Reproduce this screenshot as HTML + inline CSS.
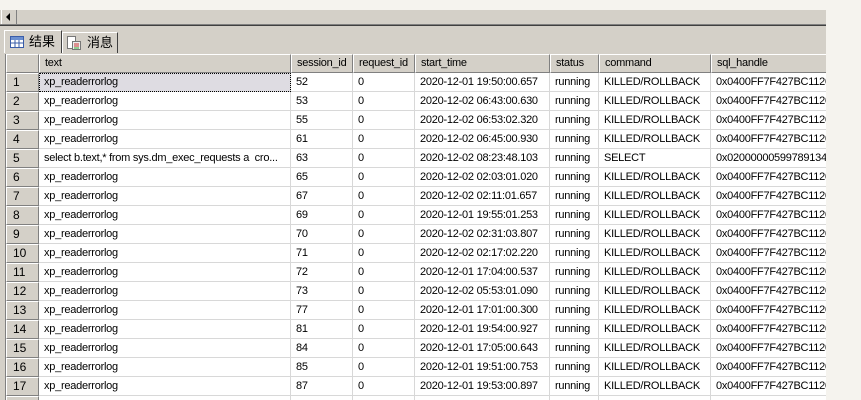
<!DOCTYPE html>
<html><head><meta charset="utf-8"><style>
*{box-sizing:border-box;margin:0;padding:0}
body{width:861px;height:400px;overflow:hidden;background:#f5f3ee;position:relative;font-family:"Liberation Sans","Noto Sans CJK SC",sans-serif;font-size:11px;color:#000}
#pane{position:absolute;left:0;top:10px;width:826px;height:390px;background:#d4d0c8}
#sb{position:absolute;left:0;top:0;width:826px;height:15px;background:#d4d0c8;border-bottom:1px solid #808080}
#sbb{position:absolute;left:1px;top:0;width:16px;height:14px;border-right:1px solid #808080;border-left:1px solid #fff}
#sbb:after{content:"";position:absolute;left:4px;top:3px;border:4px solid transparent;border-right:4px solid #000;border-left:0}
#line{position:absolute;left:0;top:14px;width:826px;height:2px;background:#808080;border-bottom:1px solid #404040}
.tab{position:absolute;top:22px;height:21px;background:#d4d0c8;border:1px solid #fff;border-right:1px solid #404040;border-bottom:none;font-size:13px;line-height:19px}
#grid{position:absolute;left:5px;top:44px;width:821px;height:346px;overflow:hidden;background:#fff;border-left:1px solid #808080}
.r{display:flex;height:19px;white-space:nowrap}
.c{flex:none;height:19px;line-height:19px;padding-left:5px;border-right:1px solid #d8d8d8;border-bottom:1px solid #d8d8d8;overflow:hidden;letter-spacing:-0.25px}
.h .c{background:#d4d0c8;border-top:1px solid #fff;border-left:1px solid #fff;border-right:1px solid #808080;border-bottom:1px solid #808080;line-height:17px}
.n{background:#d4d0c8;border-top:1px solid #fff;border-left:1px solid #fff;border-right:1px solid #808080!important;border-bottom:1px solid #808080!important;font-size:12px;padding-left:6px;line-height:17px;letter-spacing:0}
.w0{width:33px}.w1{width:252px}.w2{width:62px}.w3{width:62px}.w4{width:135px}.w5{width:49px}.w6{width:112px}.w7{width:130px}
.sel{background:#dedce2;outline:1px dotted #000;outline-offset:-1px}
</style></head><body>
<div id="pane">
<div id="sb"><div id="sbb"></div></div>
<div id="line"></div>
<div class="tab" style="left:4px;width:58px;top:20px;height:23px;z-index:2">
<svg width="14" height="12" style="position:absolute;left:5px;top:5px"><rect x="0.5" y="0.5" width="13" height="11" fill="#fff" stroke="#3a5da8"/><rect x="1" y="1" width="12" height="3" fill="#6b8fd0"/><path d="M5 4V11M9 4V11M1 7H13" stroke="#3a5da8"/></svg>
<span style="position:absolute;left:24px;top:1px">结果</span></div>
<div class="tab" style="left:62px;width:56px">
<svg width="14" height="14" style="position:absolute;left:4px;top:3px"><rect x="0.5" y="0.5" width="8" height="12" fill="#fff" stroke="#777"/><rect x="5.5" y="5.5" width="8" height="8" fill="#eee" stroke="#777"/><path d="M7 8h5M7 10h5" stroke="#c33"/><path d="M7 12h5" stroke="#3a3"/></svg>
<span style="position:absolute;left:24px;top:0">消息</span></div>
<div id="grid">
<div class="r h"><div class="c w0"></div><div class="c w1">text</div><div class="c w2">session_id</div><div class="c w3">request_id</div><div class="c w4">start_time</div><div class="c w5">status</div><div class="c w6">command</div><div class="c w7">sql_handle</div></div>
<div class="r"><div class="c w0 n">1</div><div class="c w1 sel">xp_readerrorlog</div><div class="c w2">52</div><div class="c w3">0</div><div class="c w4">2020-12-01 19:50:00.657</div><div class="c w5">running</div><div class="c w6">KILLED/ROLLBACK</div><div class="c w7">0x0400FF7F427BC1120</div></div>
<div class="r"><div class="c w0 n">2</div><div class="c w1">xp_readerrorlog</div><div class="c w2">53</div><div class="c w3">0</div><div class="c w4">2020-12-02 06:43:00.630</div><div class="c w5">running</div><div class="c w6">KILLED/ROLLBACK</div><div class="c w7">0x0400FF7F427BC1120</div></div>
<div class="r"><div class="c w0 n">3</div><div class="c w1">xp_readerrorlog</div><div class="c w2">55</div><div class="c w3">0</div><div class="c w4">2020-12-02 06:53:02.320</div><div class="c w5">running</div><div class="c w6">KILLED/ROLLBACK</div><div class="c w7">0x0400FF7F427BC1120</div></div>
<div class="r"><div class="c w0 n">4</div><div class="c w1">xp_readerrorlog</div><div class="c w2">61</div><div class="c w3">0</div><div class="c w4">2020-12-02 06:45:00.930</div><div class="c w5">running</div><div class="c w6">KILLED/ROLLBACK</div><div class="c w7">0x0400FF7F427BC1120</div></div>
<div class="r"><div class="c w0 n">5</div><div class="c w1">select b.text,* from sys.dm_exec_requests a&nbsp; cro...</div><div class="c w2">63</div><div class="c w3">0</div><div class="c w4">2020-12-02 08:23:48.103</div><div class="c w5">running</div><div class="c w6">SELECT</div><div class="c w7">0x02000000599789134</div></div>
<div class="r"><div class="c w0 n">6</div><div class="c w1">xp_readerrorlog</div><div class="c w2">65</div><div class="c w3">0</div><div class="c w4">2020-12-02 02:03:01.020</div><div class="c w5">running</div><div class="c w6">KILLED/ROLLBACK</div><div class="c w7">0x0400FF7F427BC1120</div></div>
<div class="r"><div class="c w0 n">7</div><div class="c w1">xp_readerrorlog</div><div class="c w2">67</div><div class="c w3">0</div><div class="c w4">2020-12-02 02:11:01.657</div><div class="c w5">running</div><div class="c w6">KILLED/ROLLBACK</div><div class="c w7">0x0400FF7F427BC1120</div></div>
<div class="r"><div class="c w0 n">8</div><div class="c w1">xp_readerrorlog</div><div class="c w2">69</div><div class="c w3">0</div><div class="c w4">2020-12-01 19:55:01.253</div><div class="c w5">running</div><div class="c w6">KILLED/ROLLBACK</div><div class="c w7">0x0400FF7F427BC1120</div></div>
<div class="r"><div class="c w0 n">9</div><div class="c w1">xp_readerrorlog</div><div class="c w2">70</div><div class="c w3">0</div><div class="c w4">2020-12-02 02:31:03.807</div><div class="c w5">running</div><div class="c w6">KILLED/ROLLBACK</div><div class="c w7">0x0400FF7F427BC1120</div></div>
<div class="r"><div class="c w0 n">10</div><div class="c w1">xp_readerrorlog</div><div class="c w2">71</div><div class="c w3">0</div><div class="c w4">2020-12-02 02:17:02.220</div><div class="c w5">running</div><div class="c w6">KILLED/ROLLBACK</div><div class="c w7">0x0400FF7F427BC1120</div></div>
<div class="r"><div class="c w0 n">11</div><div class="c w1">xp_readerrorlog</div><div class="c w2">72</div><div class="c w3">0</div><div class="c w4">2020-12-01 17:04:00.537</div><div class="c w5">running</div><div class="c w6">KILLED/ROLLBACK</div><div class="c w7">0x0400FF7F427BC1120</div></div>
<div class="r"><div class="c w0 n">12</div><div class="c w1">xp_readerrorlog</div><div class="c w2">73</div><div class="c w3">0</div><div class="c w4">2020-12-02 05:53:01.090</div><div class="c w5">running</div><div class="c w6">KILLED/ROLLBACK</div><div class="c w7">0x0400FF7F427BC1120</div></div>
<div class="r"><div class="c w0 n">13</div><div class="c w1">xp_readerrorlog</div><div class="c w2">77</div><div class="c w3">0</div><div class="c w4">2020-12-01 17:01:00.300</div><div class="c w5">running</div><div class="c w6">KILLED/ROLLBACK</div><div class="c w7">0x0400FF7F427BC1120</div></div>
<div class="r"><div class="c w0 n">14</div><div class="c w1">xp_readerrorlog</div><div class="c w2">81</div><div class="c w3">0</div><div class="c w4">2020-12-01 19:54:00.927</div><div class="c w5">running</div><div class="c w6">KILLED/ROLLBACK</div><div class="c w7">0x0400FF7F427BC1120</div></div>
<div class="r"><div class="c w0 n">15</div><div class="c w1">xp_readerrorlog</div><div class="c w2">84</div><div class="c w3">0</div><div class="c w4">2020-12-01 17:05:00.643</div><div class="c w5">running</div><div class="c w6">KILLED/ROLLBACK</div><div class="c w7">0x0400FF7F427BC1120</div></div>
<div class="r"><div class="c w0 n">16</div><div class="c w1">xp_readerrorlog</div><div class="c w2">85</div><div class="c w3">0</div><div class="c w4">2020-12-01 19:51:00.753</div><div class="c w5">running</div><div class="c w6">KILLED/ROLLBACK</div><div class="c w7">0x0400FF7F427BC1120</div></div>
<div class="r"><div class="c w0 n">17</div><div class="c w1">xp_readerrorlog</div><div class="c w2">87</div><div class="c w3">0</div><div class="c w4">2020-12-01 19:53:00.897</div><div class="c w5">running</div><div class="c w6">KILLED/ROLLBACK</div><div class="c w7">0x0400FF7F427BC1120</div></div>
<div class="r"><div class="c w0 n"></div><div class="c w1"></div><div class="c w2"></div><div class="c w3"></div><div class="c w4"></div><div class="c w5"></div><div class="c w6"></div><div class="c w7"></div></div>
</div>
</div>
</body></html>
